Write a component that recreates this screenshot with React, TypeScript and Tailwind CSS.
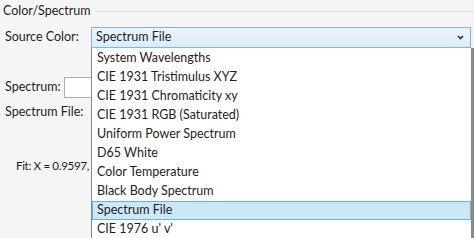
import React from "react";

const items = [
  "System Wavelengths",
  "CIE 1931 Tristimulus XYZ",
  "CIE 1931 Chromaticity xy",
  "CIE 1931 RGB (Saturated)",
  "Uniform Power Spectrum",
  "D65 White",
  "Color Temperature",
  "Black Body Spectrum",
  "Spectrum File",
  "CIE 1976 u' v'",
];

export default function App() {
  return (
    <div
      className="relative w-[474px] h-[238px] overflow-hidden bg-[#f5f5f5] text-[12.5px] text-[#1e1e1e]"
      style={{ fontFamily: 'Lato, "Noto Sans", sans-serif' }}
    >
      <div className="flex items-center h-[22px] pl-[3px]">
        <span className="leading-none">Color/Spectrum</span>
        <div className="flex-1 h-px bg-[#d5dfe5] ml-[5px]" />
      </div>
      <div className="flex items-center h-[21px] mt-[5px]">
        <span className="w-[91px] pl-[5px] leading-none">Source Color:</span>
        <div className="flex-1 mr-[3px] h-[21px] border border-[#7eb4ea] bg-gradient-to-b from-[#ecf4fc] to-[#dcecfc] flex items-center pl-[4px] pr-[6px]">
          <span className="flex-1 leading-none">Spectrum File</span>
          <svg width="7" height="5" viewBox="0 0 7 5">
            <path d="M1 1 L3.5 3.5 L6 1" stroke="#333" strokeWidth="1.7" fill="none" />
          </svg>
        </div>
      </div>
      <div className="flex items-center h-[21px] mt-[29px]">
        <span className="w-[64px] pl-[5px] leading-none">Spectrum:</span>
        <div className="w-[30px] h-[21px] border border-[#abadb3] bg-white" />
      </div>
      <div className="flex items-center h-[20px] mt-[4px]">
        <span className="pl-[5px] leading-none">Spectrum File:</span>
      </div>
      <div className="flex items-center h-[20px] mt-[34px]">
        <span className="pl-[16px] leading-none whitespace-nowrap text-[11.6px] tracking-[-0.35px]">Fit: X = 0.9597,</span>
      </div>

      <div className="absolute left-[91px] top-[48px] w-[383px] h-[200px] flex">
        <div className="w-[380px] bg-white border-l border-[#828790] pt-[1px]">
          {items.map((t) => (
            <div
              key={t}
              className={
                "h-[19px] flex items-center pl-[4px] leading-none border " +
                (t === "Spectrum File"
                  ? "bg-[#cce8f7] border-[#63b4dc]"
                  : "border-transparent")
              }
            >
              {t}
            </div>
          ))}
        </div>
        <div className="w-[3px] bg-[#8a8a8a]" />
      </div>
    </div>
  );
}
